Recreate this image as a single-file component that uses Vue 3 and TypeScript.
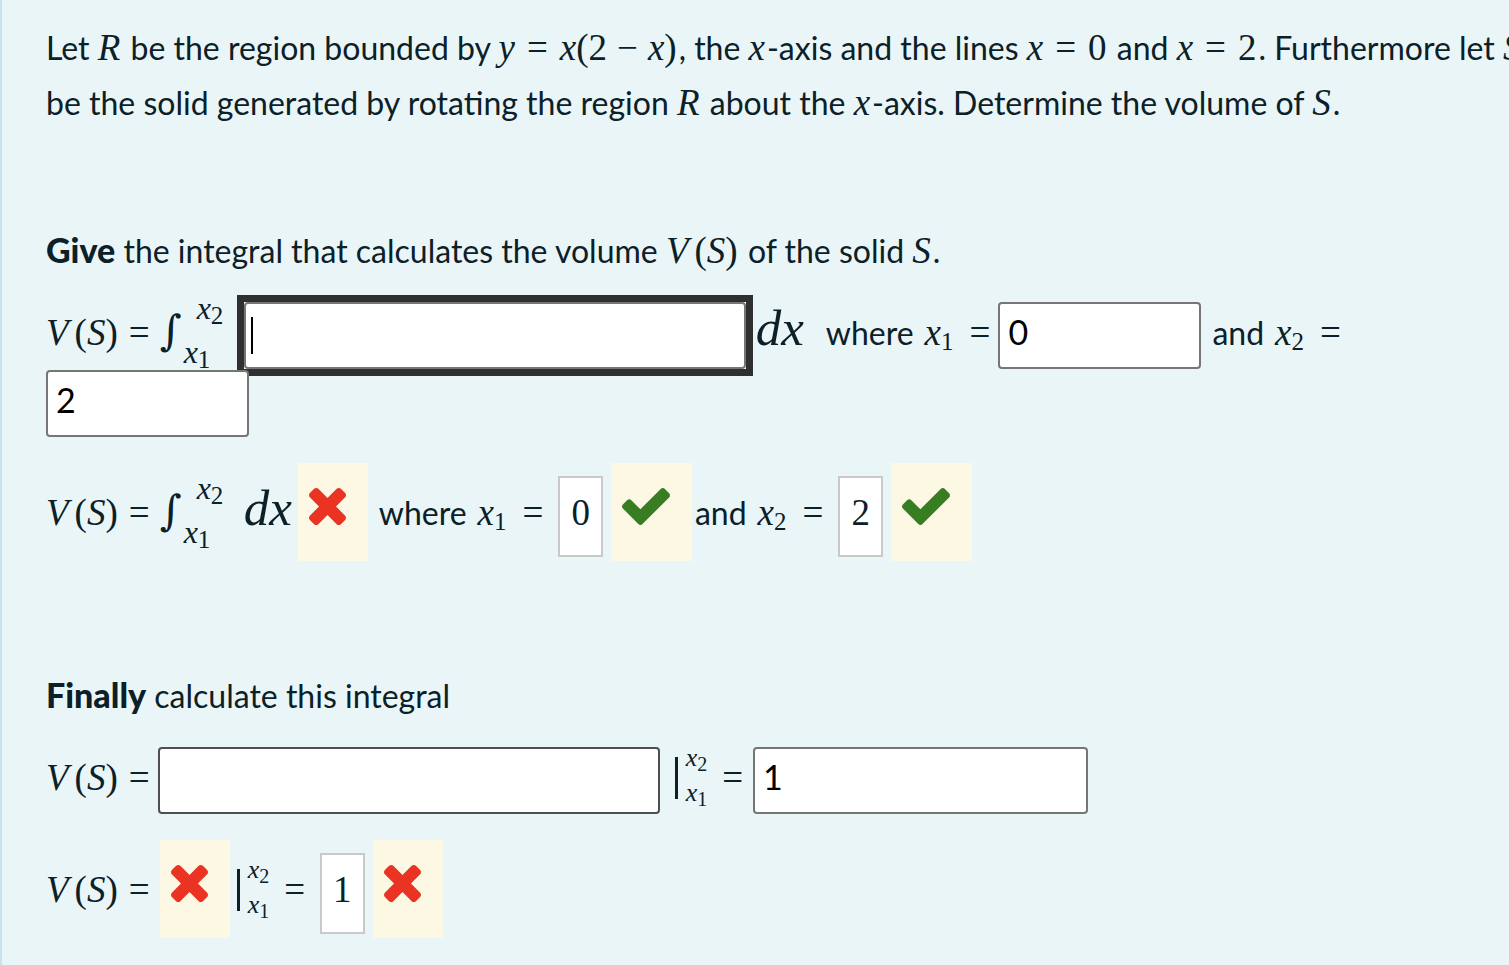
<script setup lang="ts">
import { ref } from 'vue'

const integrand = ref('')
const lower = ref('0')
const upper = ref('2')
const primitive = ref('')
const volume = ref('1')

const crossPath =
  'M1298 1322q0 40-28 68l-136 136q-28 28-68 28t-68-28l-294-294-294 294q-28 28-68 28t-68-28l-136-136q-28-28-28-68t28-68l294-294-294-294q-28-28-28-68t28-68l136-136q28-28 68-28t68 28l294 294 294-294q28-28 68-28t68 28l136 136q28 28 28 68t-28 68l-294 294 294 294q28 28 28 68z'
const checkPath =
  'M1671 566q0 40-28 68l-724 724-136 136q-28 28-68 28t-68-28l-136-136-362-362q-28-28-28-68t28-68l136-136q28-28 68-28t68 28l294 295 656-657q28-28 68-28t68 28l136 136q28 28 28 68z'
</script>

<template>
  <main class="question">
    <p class="text">
      Let <i class="m">R</i> be the region bounded by
      <span class="m"><i>y</i><span class="rel">=</span><i>x</i>(2<span class="bin">−</span><i>x</i>)</span>, the
      <i class="m">x</i>-axis and the lines
      <span class="m"><i>x</i><span class="rel">=</span>0</span> and
      <span class="m"><i>x</i><span class="rel">=</span>2</span>. Furthermore let <i class="m">S</i><br />
      be the solid generated by rotating the region <i class="m">R</i> about the <i class="m">x</i>-axis. Determine the
      volume of <i class="m">S</i>.
    </p>

    <p class="text give">
      <strong>Give</strong> the integral that calculates the volume
      <span class="m"><i class="v">V</i>(<i>S</i>)</span> of the solid <i class="m">S</i>.
    </p>

    <div class="row integral-row">
      <span class="m lhs"><i class="v">V</i>(<i>S</i>)<span class="eq">=</span></span>
      <span class="m integral"><span class="int">∫</span><span class="limits"><span class="up"><i>x</i><sub>2</sub></span><br /><i>x</i><sub>1</sub></span></span>
      <span class="active">
        <input v-model="integrand" class="field wide" type="text" aria-label="Integrand" />
        <span class="caret"></span>
      </span>
      <i class="m dx after-field">dx</i>
      <span class="label where">where</span>
      <span class="m bound"><i>x</i><sub>1</sub><span class="eq">=</span></span>
      <input v-model="lower" class="field small gap-s" type="text" aria-label="Lower limit x1" />
      <span class="label and">and</span>
      <span class="m bound"><i>x</i><sub>2</sub><span class="eq">=</span></span>
    </div>
    <div class="row">
      <input v-model="upper" class="field small over" type="text" aria-label="Upper limit x2" />
    </div>

    <div class="row feedback-row">
      <span class="m lhs"><i class="v">V</i>(<i>S</i>)<span class="eq">=</span></span>
      <span class="m integral"><span class="int">∫</span><span class="limits"><span class="up"><i>x</i><sub>2</sub></span><br /><i>x</i><sub>1</sub></span></span>
      <i class="m dx">dx</i>
      <span class="mark after-dx"><svg class="cross" viewBox="110 366 1188 1188" role="img" aria-label="Incorrect"><path :d="crossPath" /></svg></span>
      <span class="label and">where</span>
      <span class="m bound"><i>x</i><sub>1</sub><span class="eq">=</span></span>
      <span class="m answer">0</span>
      <span class="mark gap-s"><svg class="check" viewBox="121 334 1550 1188" role="img" aria-label="Correct"><path :d="checkPath" /></svg></span>
      <span class="label after-mark">and</span>
      <span class="m bound"><i>x</i><sub>2</sub><span class="eq">=</span></span>
      <span class="m answer">2</span>
      <span class="mark gap-s"><svg class="check" viewBox="121 334 1550 1188" role="img" aria-label="Correct"><path :d="checkPath" /></svg></span>
    </div>

    <p class="text finally"><strong>Finally</strong> calculate this integral</p>

    <div class="row eval-row">
      <span class="m lhs"><i class="v">V</i>(<i>S</i>)<span class="eq">=</span></span>
      <input v-model="primitive" class="field wide dark gap-s" type="text" aria-label="Antiderivative" />
      <span class="m eval after-wide"><span class="bar"></span><span class="range"><i>x</i><sub>2</sub><br /><i>x</i><sub>1</sub></span><span class="eq">=</span></span>
      <input v-model="volume" class="field medium gap-m" type="text" aria-label="Volume" />
    </div>

    <div class="row feedback-row">
      <span class="m lhs"><i class="v">V</i>(<i>S</i>)<span class="eq">=</span></span>
      <span class="mark gap-m"><svg class="cross" viewBox="110 366 1188 1188" role="img" aria-label="Incorrect"><path :d="crossPath" /></svg></span>
      <span class="m eval"><span class="bar"></span><span class="range"><i>x</i><sub>2</sub><br /><i>x</i><sub>1</sub></span><span class="eq">=</span></span>
      <span class="m answer">1</span>
      <span class="mark gap-s"><svg class="cross" viewBox="110 366 1188 1188" role="img" aria-label="Incorrect"><path :d="crossPath" /></svg></span>
    </div>
  </main>
</template>

<style>
body {
  margin: 0;
  background: #eaf5f8;
}
</style>

<style scoped>
.question {
  box-sizing: border-box;
  min-height: 100vh;
  padding: 20px 0 26px 44px;
  border-left: 2px solid #c8e2ee;
  overflow: hidden;
  background: #eaf5f8;
  color: #0b2027;
  font-family: Lato, "Liberation Sans", sans-serif;
  font-size: 32px;
  line-height: 55px;
  white-space: nowrap;
}
.text {
  margin: 0;
}
.give {
  margin-top: 93px;
}
.finally {
  margin-top: 107px;
}
strong {
  font-size: 34px;
  font-weight: 900;
  line-height: 40px;
}
.m {
  font-family: "Liberation Serif", serif;
  font-size: 37px;
  line-height: 40px;
}
.text .m {
  margin-right: 2px;
}
.v {
  margin-right: 6px;
}
.rel {
  margin: 0 12px;
}
.bin {
  margin: 0 10px;
}
.eq {
  margin-left: 11px;
}
.bound .eq {
  margin-left: 16px;
}
.eval .eq {
  margin-left: 15px;
}
.row {
  display: flex;
  align-items: baseline;
  line-height: 40px;
}
.integral-row {
  margin-top: 8px;
}
.feedback-row {
  margin-top: 26px;
}
.eval-row {
  margin-top: 17px;
}
sub {
  font-size: 25px;
  line-height: 0;
  vertical-align: -5px;
}
.integral {
  width: 84px;
  margin-left: 10px;
}
.int {
  display: inline-block;
  width: 24px;
  font-family: "DejaVu Serif", serif;
  font-size: 42px;
}
.limits {
  display: inline-block;
  margin-bottom: -4px;
  font-size: 32px;
  line-height: 44px;
  vertical-align: -18px;
}
.up {
  margin-left: 13px;
}
.dx {
  font-size: 51px;
}
.after-field {
  margin-left: 10px;
}
.after-dx {
  margin-left: 6px;
}
.where {
  margin-left: 22px;
}
.and {
  margin-left: 11px;
}
.after-mark {
  margin-left: 3px;
}
.bound {
  margin-left: 11px;
}
.gap-s {
  margin-left: 8px;
}
.gap-m {
  margin-left: 10px;
}
.field {
  box-sizing: border-box;
  height: 67px;
  padding: 0 8px 8px;
  border: 2px solid #767676;
  border-radius: 4px;
  background: #fff;
  color: #000;
  font-family: inherit;
  font-size: 34px;
  outline: none;
}
.wide {
  width: 502px;
}
.medium {
  width: 335px;
}
.small {
  width: 203px;
}
.dark {
  border-color: #4f4f51;
}
.over {
  position: relative;
  z-index: 1;
}
.active {
  position: relative;
  display: flex;
  background: #fff;
  box-shadow: 0 0 0 7px #2f2f2f;
}
.caret {
  position: absolute;
  top: 15px;
  left: 7px;
  width: 2px;
  height: 37px;
  background: #000;
}
.answer {
  box-sizing: border-box;
  height: 81px;
  margin-top: 13px;
  margin-left: 15px;
  padding: 15px 11px 0;
  border: 2px solid #c9c9c9;
  background: #fff;
}
.mark {
  align-self: stretch;
  box-sizing: border-box;
  height: 98px;
  padding: 25px 22px 0 11px;
  background: #fcf8e3;
}
svg {
  display: block;
  height: 37px;
}
.cross {
  width: 37px;
  fill: #eb3323;
}
.check {
  width: 48px;
  fill: #377e22;
}
.eval {
  margin-left: 7px;
}
.after-wide {
  margin-left: 15px;
}
.bar {
  display: inline-block;
  width: 3px;
  height: 42px;
  margin-right: 8px;
  background: #0b2027;
  vertical-align: -9px;
}
.range {
  display: inline-block;
  font-size: 26px;
  line-height: 35px;
  vertical-align: -11px;
}
.range sub {
  font-size: 20px;
}
</style>
